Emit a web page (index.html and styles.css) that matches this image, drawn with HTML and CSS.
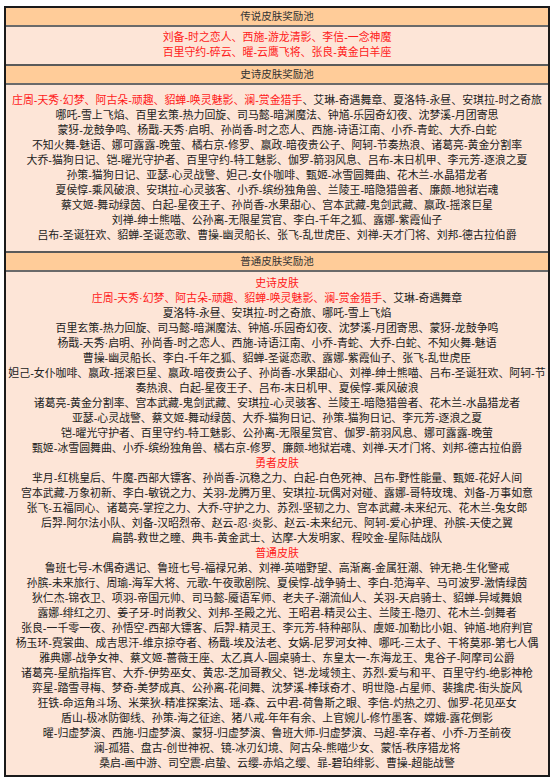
FILE: index.html
```html
<!DOCTYPE html>
<html lang="zh-CN">
<head>
<meta charset="utf-8">
<title>皮肤奖励池</title>
<link rel="stylesheet" href="styles.css">
</head>
<body>
<div class="pool">
  <div class="hd">传说皮肤奖励池</div>
  <div class="bd bd-legend">
    <p class="red">刘备-时之恋人、西施-游龙清影、李信-一念神魔</p>
    <p class="red">百里守约-碎云、曜-云鹰飞将、张良-黄金白羊座</p>
  </div>
  <div class="hd">史诗皮肤奖励池</div>
  <div class="bd bd-epic">
    <p><span class="red">庄周-天秀·幻梦、阿古朵-顽趣、貂蝉-唤灵魅影、澜-赏金猎手</span>、艾琳-奇遇舞章、夏洛特-永昼、安琪拉-时之奇旅</p>
    <p>哪吒-雪上飞焰、百里玄策-热力回旋、司马懿-暗渊魔法、钟馗-乐园奇幻夜、沈梦溪-月团寄思</p>
    <p>蒙犽-龙鼓争鸣、杨戬-天秀·启明、孙尚香-时之恋人、西施-诗语江南、小乔-青蛇、大乔-白蛇</p>
    <p>不知火舞-魅语、娜可露露-晚萤、橘右京-修罗、嬴政-暗夜贵公子、阿轲-节奏热浪、诸葛亮-黄金分割率</p>
    <p>大乔-猫狗日记、铠-曜光守护者、百里守约-特工魅影、伽罗-箭羽风息、吕布-末日机甲、李元芳-逐浪之夏</p>
    <p>孙策-猫狗日记、亚瑟-心灵战警、妲己-女仆咖啡、甄姬-冰雪圆舞曲、花木兰-水晶猎龙者</p>
    <p>夏侯惇-乘风破浪、安琪拉-心灵骇客、小乔-缤纷独角兽、兰陵王-暗隐猎兽者、廉颇-地狱岩魂</p>
    <p>蔡文姬-舞动绿茵、白起-星夜王子、孙尚香-水果甜心、宫本武藏-鬼剑武藏、嬴政-摇滚巨星</p>
    <p>刘禅-绅士熊喵、公孙离-无限星赏官、李白-千年之狐、露娜-紫霞仙子</p>
    <p>吕布-圣诞狂欢、貂蝉-圣诞恋歌、曹操-幽灵船长、张飞-乱世虎臣、刘禅-天才门将、刘邦-德古拉伯爵</p>
  </div>
  <div class="hd">普通皮肤奖励池</div>
  <div class="bd bd-normal">
    <p class="red">史诗皮肤</p>
    <p><span class="red">庄周-天秀·幻梦、阿古朵-顽趣、貂蝉-唤灵魅影、澜-赏金猎手</span>、艾琳-奇遇舞章</p>
    <p>夏洛特-永昼、安琪拉-时之奇旅、哪吒-雪上飞焰</p>
    <p>百里玄策-热力回旋、司马懿-暗渊魔法、钟馗-乐园奇幻夜、沈梦溪-月团寄思、蒙犽-龙鼓争鸣</p>
    <p>杨戬-天秀·启明、孙尚香-时之恋人、西施-诗语江南、小乔-青蛇、大乔-白蛇、不知火舞-魅语</p>
    <p>曹操-幽灵船长、李白-千年之狐、貂蝉-圣诞恋歌、露娜-紫霞仙子、张飞-乱世虎臣</p>
    <p>妲己-女仆咖啡、嬴政-摇滚巨星、嬴政-暗夜贵公子、孙尚香-水果甜心、刘禅-绅士熊喵、吕布-圣诞狂欢、阿轲-节奏热浪、白起-星夜王子、吕布-末日机甲、夏侯惇-乘风破浪</p>
    <p>诸葛亮-黄金分割率、宫本武藏-鬼剑武藏、安琪拉-心灵骇客、兰陵王-暗隐猎兽者、花木兰-水晶猎龙者</p>
    <p>亚瑟-心灵战警、蔡文姬-舞动绿茵、大乔-猫狗日记、孙策-猫狗日记、李元芳-逐浪之夏</p>
    <p>铠-曜光守护者、百里守约-特工魅影、公孙离-无限星赏官、伽罗-箭羽风息、娜可露露-晚萤</p>
    <p>甄姬-冰雪圆舞曲、小乔-缤纷独角兽、橘右京-修罗、廉颇-地狱岩魂、刘禅-天才门将、刘邦-德古拉伯爵</p>
    <p class="red">勇者皮肤</p>
    <p>芈月-红桃皇后、牛魔-西部大镖客、孙尚香-沉稳之力、白起-白色死神、吕布-野性能量、甄姬-花好人间</p>
    <p>宫本武藏-万象初新、李白-敏锐之力、关羽-龙腾万里、安琪拉-玩偶对对碰、露娜-哥特玫瑰、刘备-万事如意</p>
    <p>张飞-五福同心、诸葛亮-掌控之力、大乔-守护之力、苏烈-坚韧之力、宫本武藏-未来纪元、花木兰-兔女郎</p>
    <p>后羿-阿尔法小队、刘备-汉昭烈帝、赵云-忍·炎影、赵云-未来纪元、阿轲-爱心护理、孙膑-天使之翼</p>
    <p>扁鹊-救世之瞳、典韦-黄金武士、达摩-大发明家、程咬金-星际陆战队</p>
    <p class="red">普通皮肤</p>
    <p>鲁班七号-木偶奇遇记、鲁班七号-福禄兄弟、刘禅-英喵野望、高渐离-金属狂潮、钟无艳-生化警戒</p>
    <p>孙膑-未来旅行、周瑜-海军大将、元歌-午夜歌剧院、夏侯惇-战争骑士、李白-范海辛、马可波罗-激情绿茵</p>
    <p>狄仁杰-锦衣卫、项羽-帝国元帅、司马懿-魇语军师、老夫子-潮流仙人、关羽-天启骑士、貂蝉-异域舞娘</p>
    <p>露娜-绯红之刃、姜子牙-时尚教父、刘邦-圣殿之光、王昭君-精灵公主、兰陵王-隐刃、花木兰-剑舞者</p>
    <p>张良-一千零一夜、孙悟空-西部大镖客、后羿-精灵王、李元芳-特种部队、虞姬-加勒比小姐、钟馗-地府判官</p>
    <p>杨玉环-霓裳曲、成吉思汗-维京掠夺者、杨戬-埃及法老、女娲-尼罗河女神、哪吒-三太子、干将莫邪-第七人偶</p>
    <p>雅典娜-战争女神、蔡文姬-蔷薇王座、太乙真人-圆桌骑士、东皇太一-东海龙王、鬼谷子-阿摩司公爵</p>
    <p>诸葛亮-星航指挥官、大乔-伊势巫女、黄忠-芝加哥教父、铠-龙域领主、苏烈-爱与和平、百里守约-绝影神枪</p>
    <p>弈星-踏雪寻梅、梦奇-美梦成真、公孙离-花间舞、沈梦溪-棒球奇才、明世隐-占星师、裴擒虎-街头旋风</p>
    <p>狂铁-命运角斗场、米莱狄-精准探案法、瑶-森、云中君-荷鲁斯之眼、李信-灼热之刃、伽罗-花见巫女</p>
    <p>盾山-极冰防御线、孙策-海之征途、猪八戒-年年有余、上官婉儿-修竹墨客、嫦娥-露花倒影</p>
    <p>曜-归虚梦演、西施-归虚梦演、蒙犽-归虚梦演、鲁班大师-归虚梦演、马超-幸存者、小乔-万圣前夜</p>
    <p>澜-孤猎、盘古-创世神祝、镜-冰刃幻境、阿古朵-熊喵少女、蒙恬-秩序猎龙将</p>
    <p>桑启-画中游、司空震-启蛰、云缨-赤焰之缨、暃-碧珀绯影、曹操-超能战警</p>
  </div>
</div>
</body>
</html>
```
FILE: styles.css
```css
html, body {
  margin: 0;
  padding: 0;
  background: #ffffff;
}

body {
  font-family: "Liberation Sans", "Noto Sans CJK SC", sans-serif;
}

.pool {
  margin: 6px 4px;
  border: 2px solid #1a1a1a;
}

.hd {
  background: #ffcc99;
  height: 17px;
  line-height: 17px;
  text-align: center;
  font-size: 10.5px;
  color: #333333;
  border-bottom: 2px solid #6a6a6a;
}

.bd {
  background: #fde5d7;
  text-align: center;
  font-size: 10.9px;
  line-height: 15px;
  color: #222222;
  border-bottom: 2px solid #5a5a5a;
}

.bd:last-child {
  border-bottom: 0;
}

.bd p {
  margin: 0;
}

.bd-legend {
  padding: 3px 0 4px;
}

.bd-epic {
  padding: 8px 0;
}

.bd-normal {
  padding: 4px 0;
}

.red {
  color: #ff1a1a;
}
```
